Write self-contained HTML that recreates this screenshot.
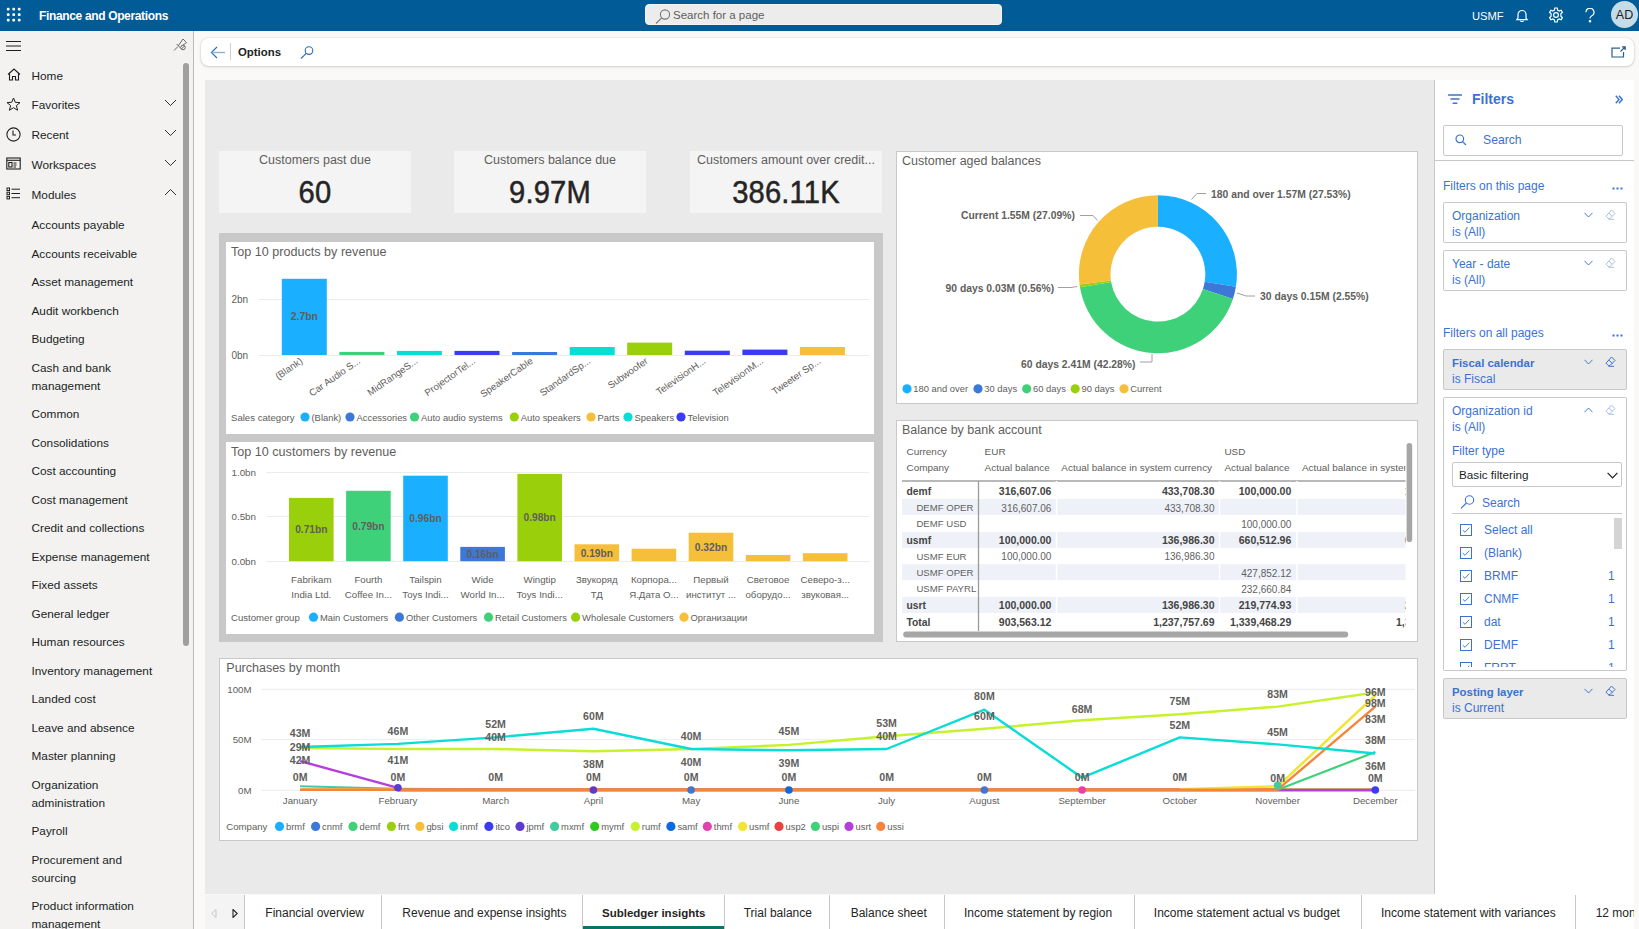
<!DOCTYPE html>
<html><head><meta charset="utf-8">
<style>
*{margin:0;padding:0;box-sizing:border-box}
html,body{width:1639px;height:929px;overflow:hidden;font-family:"Liberation Sans",sans-serif;background:#faf9f8;position:relative}
.a{position:absolute}
#hdr{left:0;top:0;width:1639px;height:31px;background:#005b96}
#nav{left:0;top:31px;width:194px;height:898px;background:#f3f2f1;border-right:1px solid #bdbbb9}
#nav .it{position:absolute;left:31.5px;font-size:11.8px;color:#201f1e;line-height:18px;white-space:nowrap}
#optbar{left:201px;top:38px;width:1433px;height:28px;background:#fff;border-radius:8px;box-shadow:0 0 2px rgba(0,0,0,.14),0 1px 3px rgba(0,0,0,.14)}
#canvas{left:205px;top:80px;width:1230px;height:814px;background:#eaeaea;border-right:1px solid #c8c8c8}
#fpanel{left:1435px;top:80px;width:199px;height:849px;background:#fff}
#tabs{left:205px;top:895px;width:1429px;height:34px;background:#fff;overflow:hidden}
.tab{top:10.5px;font-size:12px;line-height:15px;color:#252423;white-space:nowrap}
.tab.b{font-weight:bold;font-size:11.5px}
.fl{font-size:12px;line-height:15px;color:#3b72d2;white-space:nowrap}
.dots{font-size:12px;line-height:15px;color:#3b72d2;letter-spacing:-1px;font-weight:bold}
.fc{width:184px;border:1px solid #c8c8c8;border-radius:2px;background:#fff}
.fc.g{background:#eaeaea}
.fc .n{position:absolute;left:8px;top:4.5px;font-size:12px;line-height:16px;color:#3b72d2;white-space:nowrap}
.fc .n.b{font-weight:bold;font-size:11.4px}
.fc .v{position:absolute;left:8px;top:20.5px;font-size:12px;line-height:16px;color:#3b72d2;white-space:nowrap}
.cl{font-size:12px;line-height:15px;color:#3b72d2;white-space:nowrap}
.kpi{top:151px;width:192px;height:62px;background:#f4f4f4;text-align:center;color:#252423}
.kpi .t{position:absolute;left:0;right:0;top:2px;font-size:12.5px;line-height:15px;color:#605e5c;white-space:nowrap}
.kpi .v{position:absolute;left:0;right:0;top:25px;font-size:31px;line-height:34px;letter-spacing:.2px;transform:scaleX(.94);-webkit-text-stroke:.5px #252423;color:#252423}
.card{background:#fff;border:1px solid #c8c8c8}
</style></head><body>
<div id="canvas" class="a"></div>
<!-- HEADER -->
<div id="hdr" class="a">
 <svg class="a" style="left:5.5px;top:6.5px" width="16" height="16" viewBox="0 0 16 16" fill="#fff"><rect x="0.8" y="0.8" width="2.8" height="2.8" rx="1"/><rect x="6.3" y="0.8" width="2.8" height="2.8" rx="1"/><rect x="11.8" y="0.8" width="2.8" height="2.8" rx="1"/><rect x="0.8" y="6.3" width="2.8" height="2.8" rx="1"/><rect x="6.3" y="6.3" width="2.8" height="2.8" rx="1"/><rect x="11.8" y="6.3" width="2.8" height="2.8" rx="1"/><rect x="0.8" y="11.8" width="2.8" height="2.8" rx="1"/><rect x="6.3" y="11.8" width="2.8" height="2.8" rx="1"/><rect x="11.8" y="11.8" width="2.8" height="2.8" rx="1"/></svg>
 <div class="a" style="left:39px;top:8.7px;font-size:12px;letter-spacing:-.35px;font-weight:bold;color:#fff;white-space:nowrap;line-height:15px">Finance and Operations</div>
 <div class="a" style="left:645px;top:4px;width:357px;height:21px;background:#ececec;border:1px solid #f6f4f2;border-radius:4px"></div>
 <svg class="a" style="left:655px;top:9px" width="16" height="15" viewBox="0 0 16 15" fill="none" stroke="#7a7775" stroke-width="1.1"><circle cx="10" cy="5.5" r="4.6"/><path d="M6.7 8.8 L1 14.5"/></svg>
 <div class="a" style="left:673px;top:8px;font-size:11.5px;color:#605e5c;white-space:nowrap;line-height:14px">Search for a page</div>
 <div class="a" style="left:1472px;top:9px;font-size:11.2px;color:#fff;white-space:nowrap;line-height:14px">USMF</div>
 <svg class="a" style="left:1515px;top:9px" width="14" height="13" viewBox="0 0 14 13" fill="none" stroke="#fff" stroke-width="1.2"><path d="M3 9 V5.5 A4 4 0 0 1 11 5.5 V9 L12.2 10.6 H1.8 Z"/><path d="M5.5 11.6 A1.6 1.6 0 0 0 8.5 11.6"/></svg>
 <svg class="a" style="left:1548px;top:7px" width="16" height="16" viewBox="0 0 16 16" fill="none" stroke="#fff" stroke-width="1.2"><circle cx="8" cy="8" r="2.4"/><path d="M6.8 1 H9.2 L9.6 3 L11.3 4 L13.2 3.2 L14.4 5.3 L12.9 6.7 V9.3 L14.4 10.7 L13.2 12.8 L11.3 12 L9.6 13 L9.2 15 H6.8 L6.4 13 L4.7 12 L2.8 12.8 L1.6 10.7 L3.1 9.3 V6.7 L1.6 5.3 L2.8 3.2 L4.7 4 L6.4 3 Z"/></svg>
 <svg class="a" style="left:1584px;top:8px" width="12" height="15" viewBox="0 0 12 15" fill="none" stroke="#fff" stroke-width="1.2"><path d="M2 4.3 A4 4 0 1 1 7.5 8 C6.4 8.6 6 9.3 6 10.6"/><circle cx="6" cy="13.3" r=".7" fill="#fff"/></svg>
 <div class="a" style="left:1611px;top:1px;width:27px;height:27px;border-radius:50%;background:#c5dbe8;color:#201f1e;font-size:12.5px;line-height:29px;text-align:center">AD</div>
</div>

<!-- NAV -->
<div id="nav" class="a">
 <svg class="a" style="left:6px;top:10px" width="16" height="11" viewBox="0 0 16 11" stroke="#201f1e" stroke-width="1"><path d="M0 .5H15M0 5H15M0 9.5H15"/></svg>
 <svg class="a" style="left:173px;top:6px" width="15" height="15" viewBox="0 0 15 15" fill="none" stroke="#6b6967" stroke-width="1"><path d="M1 13.5 L5 9.5 M3.5 7 L8 11.5 M5.2 8.8 L10 2 L13.5 5.5 L8.2 9.5"/><circle cx="10" cy="10.5" r="2.3" fill="#f3f2f1"/><path d="M8.6 11.9 L11.4 9.1"/></svg>
 <div class="a" style="left:183px;top:32px;width:6px;height:583px;background:#a19f9d;border-radius:3px"></div>
 <!-- icons -->
 <svg class="a" style="left:7px;top:37px" width="14" height="13" viewBox="0 0 14 13" fill="none" stroke="#201f1e" stroke-width="1.1"><path d="M1 6.5 L7 1 L13 6.5 M2.5 5.5 V12 H5.5 V8.5 H8.5 V12 H11.5 V5.5"/></svg>
 <svg class="a" style="left:6px;top:66px" width="15" height="15" viewBox="0 0 15 15" fill="none" stroke="#201f1e" stroke-width="1"><path d="M7.5 1 L9.3 5.3 L14 5.6 L10.4 8.6 L11.6 13.3 L7.5 10.7 L3.4 13.3 L4.6 8.6 L1 5.6 L5.7 5.3 Z"/></svg>
 <svg class="a" style="left:6px;top:96px" width="15" height="15" viewBox="0 0 15 15" fill="none" stroke="#201f1e" stroke-width="1.1"><circle cx="7.5" cy="7.5" r="6.6"/><path d="M7 3.5 V8 H10"/></svg>
 <svg class="a" style="left:6px;top:126px" width="15" height="14" viewBox="0 0 15 14" fill="none" stroke="#201f1e" stroke-width="1.1"><rect x=".8" y="1" width="13.4" height="11"/><path d="M.8 3.3 H14.2"/><rect x="2.8" y="5.5" width="3.2" height="4.5"/><path d="M7.5 6 H10.5 M7.5 8 H10.5 M7.5 10 H10"/></svg>
 <svg class="a" style="left:6px;top:156px" width="15" height="13" viewBox="0 0 15 13" fill="none" stroke="#201f1e" stroke-width="1"><rect x="1" y="1" width="2.5" height="2.5"/><rect x="1" y="5.2" width="2.5" height="2.5"/><rect x="1" y="9.4" width="2.5" height="2.5"/><path d="M5.5 2.2 H14 M5.5 6.5 H14 M5.5 10.7 H14"/></svg>
 <svg class="a" style="left:164px;top:68px" width="13" height="70" viewBox="0 0 13 70" fill="none" stroke="#323130" stroke-width="1"><path d="M1 1 L6.5 6.5 L12 1 M1 31 L6.5 36.5 L12 31 M1 61 L6.5 66.5 L12 61"/></svg>
 <svg class="a" style="left:164px;top:157px" width="13" height="8" viewBox="0 0 13 8" fill="none" stroke="#323130" stroke-width="1"><path d="M1 7 L6.5 1.5 L12 7"/></svg>
 <div class="it" style="top:35.5px">Home</div>
 <div class="it" style="top:64.5px">Favorites</div>
 <div class="it" style="top:95px">Recent</div>
 <div class="it" style="top:124.5px">Workspaces</div>
 <div class="it" style="top:155px">Modules</div>
  <div class="it" style="top:184.9px">Accounts payable</div>
 <div class="it" style="top:213.9px">Accounts receivable</div>
 <div class="it" style="top:242.4px">Asset management</div>
 <div class="it" style="top:270.9px">Audit workbench</div>
 <div class="it" style="top:299.4px">Budgeting</div>
 <div class="it" style="top:328.4px">Cash and bank<br>management</div>
 <div class="it" style="top:373.9px">Common</div>
 <div class="it" style="top:402.9px">Consolidations</div>
 <div class="it" style="top:431.4px">Cost accounting</div>
 <div class="it" style="top:459.9px">Cost management</div>
 <div class="it" style="top:488.4px">Credit and collections</div>
 <div class="it" style="top:516.9px">Expense management</div>
 <div class="it" style="top:545.4px">Fixed assets</div>
 <div class="it" style="top:573.9px">General ledger</div>
 <div class="it" style="top:602.4px">Human resources</div>
 <div class="it" style="top:630.9px">Inventory management</div>
 <div class="it" style="top:659.4px">Landed cost</div>
 <div class="it" style="top:687.9px">Leave and absence</div>
 <div class="it" style="top:716.4px">Master planning</div>
 <div class="it" style="top:744.9px">Organization<br>administration</div>
 <div class="it" style="top:790.9px">Payroll</div>
 <div class="it" style="top:819.9px">Procurement and<br>sourcing</div>
 <div class="it" style="top:866.4px">Product information<br>management</div>
</div>

<!-- OPTIONS BAR -->
<div id="optbar" class="a">
 <svg class="a" style="left:9px;top:8px" width="16" height="13" viewBox="0 0 16 13" fill="none" stroke="#2b6cb0" stroke-width="1.1"><path d="M7 1 L1.3 6.5 L7 12"/><path d="M1.5 6.5 H15" stroke="#8fb0cc" stroke-width="1.4"/></svg>
 <div class="a" style="left:29px;top:5px;width:1px;height:17px;background:#d2d0ce"></div>
 <div class="a" style="left:37px;top:7px;font-size:11.4px;font-weight:bold;color:#201f1e;line-height:14px">Options</div>
 <svg class="a" style="left:99px;top:8px" width="14" height="13" viewBox="0 0 14 13" fill="none" stroke="#2b6cb0" stroke-width="1.1"><circle cx="9" cy="4.6" r="3.8"/><path d="M6.3 7.4 L1 12.5"/></svg>
 <svg class="a" style="left:1410px;top:8px" width="15" height="12" viewBox="0 0 15 12" fill="none" stroke="#2b5d8a" stroke-width="1.2"><path d="M9 2.2 H1 V11 H12.5 V6"/><path d="M9.5 5.5 L14 1 M11 .8 H14.2 V4"/></svg>
</div>

<!-- FILTER PANEL -->
<div id="fpanel" class="a"> <svg class="a" style="left:13px;top:13.5px" width="14" height="11" viewBox="0 0 14 11" fill="none" stroke="#3b72d2" stroke-width="1.4" stroke-linecap="round"><path d="M.5 1 H13.5 M3 5 H11 M5.2 9.2 H8.8"/></svg>
 <div class="a" style="left:37px;top:11px;font-size:14px;font-weight:bold;color:#3b72d2;line-height:17px">Filters</div>
 <svg class="a" style="left:180px;top:15px" width="8" height="9" viewBox="0 0 8 9" fill="none" stroke="#3b72d2" stroke-width="1.4"><path d="M.8 .8 L4 4.5 L.8 8.2 M4 .8 L7.2 4.5 L4 8.2"/></svg>
 <div class="a" style="left:8px;top:45px;width:180px;height:31px;border:1px solid #c8c8c8;border-radius:2px"></div>
 <svg class="a" style="left:20px;top:54px" width="12" height="12" viewBox="0 0 12 12" fill="none" stroke="#3b72d2" stroke-width="1.2"><circle cx="4.8" cy="4.8" r="3.8"/><path d="M7.6 7.6 L11 11"/></svg>
 <div class="a" style="left:48px;top:53px;font-size:12.2px;color:#3b72d2;line-height:15px">Search</div>
 <div class="a" style="left:0;top:80px;width:199px;height:1px;background:#c8c8c8"></div>
 <div class="a fl" style="left:8px;top:99px">Filters on this page</div>
 <svg class="a" style="left:177px;top:107px" width="11" height="3" viewBox="0 0 11 3" fill="#3b72d2"><rect x="0.5" y="0.5" width="2" height="2"/><rect x="4.5" y="0.5" width="2" height="2"/><rect x="8.5" y="0.5" width="2" height="2"/></svg>
 <div class="a fc" style="left:8px;top:122px;height:41px"><div class="n">Organization</div><div class="v">is (All)</div><svg class="a" style="left:140px;top:9px" width="9" height="6" viewBox="0 0 9 6" fill="none" stroke="#3b72d2" stroke-width="0.95"><path d="M.5 .8 L4.5 5 L8.5 .8"/></svg> <svg class="a" style="left:161px;top:6px" width="11" height="11" viewBox="0 0 11 11" fill="none" stroke="#a9c0ea" stroke-width="1"><path d="M6.5 1 L10 4.5 L5 9.5 H3.3 L1 7.2 Z M3.8 4 L7.3 7.5 M3.5 10.3 H9"/></svg></div>
 <div class="a fc" style="left:8px;top:170px;height:41px"><div class="n">Year - date</div><div class="v">is (All)</div><svg class="a" style="left:140px;top:9px" width="9" height="6" viewBox="0 0 9 6" fill="none" stroke="#3b72d2" stroke-width="0.95"><path d="M.5 .8 L4.5 5 L8.5 .8"/></svg> <svg class="a" style="left:161px;top:6px" width="11" height="11" viewBox="0 0 11 11" fill="none" stroke="#a9c0ea" stroke-width="1"><path d="M6.5 1 L10 4.5 L5 9.5 H3.3 L1 7.2 Z M3.8 4 L7.3 7.5 M3.5 10.3 H9"/></svg></div>
 <div class="a fl" style="left:8px;top:246px">Filters on all pages</div>
 <svg class="a" style="left:177px;top:254px" width="11" height="3" viewBox="0 0 11 3" fill="#3b72d2"><rect x="0.5" y="0.5" width="2" height="2"/><rect x="4.5" y="0.5" width="2" height="2"/><rect x="8.5" y="0.5" width="2" height="2"/></svg>
 <div class="a fc g" style="left:8px;top:269px;height:41px"><div class="n b">Fiscal calendar</div><div class="v">is Fiscal</div><svg class="a" style="left:140px;top:9px" width="9" height="6" viewBox="0 0 9 6" fill="none" stroke="#3b72d2" stroke-width="0.95"><path d="M.5 .8 L4.5 5 L8.5 .8"/></svg> <svg class="a" style="left:161px;top:6px" width="11" height="11" viewBox="0 0 11 11" fill="none" stroke="#3b72d2" stroke-width="1"><path d="M6.5 1 L10 4.5 L5 9.5 H3.3 L1 7.2 Z M3.8 4 L7.3 7.5 M3.5 10.3 H9"/></svg></div>
 <div class="a fc" style="left:8px;top:317px;height:274px"><div class="n">Organization id</div><div class="v">is (All)</div><svg class="a" style="left:140px;top:9px" width="9" height="6" viewBox="0 0 9 6" fill="none" stroke="#3b72d2" stroke-width="0.95"><path d="M.5 5.2 L4.5 1 L8.5 5.2"/></svg> <svg class="a" style="left:161px;top:6px" width="11" height="11" viewBox="0 0 11 11" fill="none" stroke="#a9c0ea" stroke-width="1"><path d="M6.5 1 L10 4.5 L5 9.5 H3.3 L1 7.2 Z M3.8 4 L7.3 7.5 M3.5 10.3 H9"/></svg>
  <div class="a fl" style="left:8px;top:46px">Filter type</div>
  <div class="a" style="left:8px;top:64px;width:170px;height:25px;border:1px solid #c8c8c8;border-radius:2px;background:#fff"></div>
  <div class="a" style="left:15px;top:70px;font-size:11.7px;color:#201f1e;line-height:14px">Basic filtering</div>
  <svg class="a" style="left:163px;top:74px" width="11" height="7" viewBox="0 0 11 7" fill="none" stroke="#201f1e" stroke-width="1.2"><path d="M.6 .8 L5.5 5.8 L10.4 .8"/></svg>
  <svg class="a" style="left:16px;top:97px" width="15" height="14" viewBox="0 0 15 14" fill="none" stroke="#3b72d2" stroke-width="1.1"><circle cx="9.5" cy="5" r="4.2"/><path d="M6.4 8 L1 13.3"/></svg>
  <div class="a" style="left:38px;top:98px;font-size:12px;color:#3b72d2;line-height:15px">Search</div>
  <div class="a" style="left:8px;top:115px;width:170px;height:1px;background:#c8c8c8"></div>
  <div class="a" style="left:170px;top:120px;width:8px;height:31px;background:#d4d4d4"></div>
  <div class="a" style="left:0;top:118px;width:182px;height:151px;overflow:hidden">
   <svg class="a" style="left:16px;top:8px" width="12" height="12" viewBox="0 0 12 12" fill="none" stroke="#3b72d2"><rect x=".5" y=".5" width="11" height="11"/><path d="M2.8 6.2 L5 8.3 L9.3 3.6" stroke-width=".9"/></svg><div class="a cl" style="left:40px;top:7px">Select all</div><div class="a cl" style="left:164px;top:7px"></div>
   <svg class="a" style="left:16px;top:31px" width="12" height="12" viewBox="0 0 12 12" fill="none" stroke="#3b72d2"><rect x=".5" y=".5" width="11" height="11"/><path d="M2.8 6.2 L5 8.3 L9.3 3.6" stroke-width=".9"/></svg><div class="a cl" style="left:40px;top:30px">(Blank)</div><div class="a cl" style="left:164px;top:30px"></div>
   <svg class="a" style="left:16px;top:54px" width="12" height="12" viewBox="0 0 12 12" fill="none" stroke="#3b72d2"><rect x=".5" y=".5" width="11" height="11"/><path d="M2.8 6.2 L5 8.3 L9.3 3.6" stroke-width=".9"/></svg><div class="a cl" style="left:40px;top:53px">BRMF</div><div class="a cl" style="left:164px;top:53px">1</div>
   <svg class="a" style="left:16px;top:77px" width="12" height="12" viewBox="0 0 12 12" fill="none" stroke="#3b72d2"><rect x=".5" y=".5" width="11" height="11"/><path d="M2.8 6.2 L5 8.3 L9.3 3.6" stroke-width=".9"/></svg><div class="a cl" style="left:40px;top:76px">CNMF</div><div class="a cl" style="left:164px;top:76px">1</div>
   <svg class="a" style="left:16px;top:100px" width="12" height="12" viewBox="0 0 12 12" fill="none" stroke="#3b72d2"><rect x=".5" y=".5" width="11" height="11"/><path d="M2.8 6.2 L5 8.3 L9.3 3.6" stroke-width=".9"/></svg><div class="a cl" style="left:40px;top:99px">dat</div><div class="a cl" style="left:164px;top:99px">1</div>
   <svg class="a" style="left:16px;top:123px" width="12" height="12" viewBox="0 0 12 12" fill="none" stroke="#3b72d2"><rect x=".5" y=".5" width="11" height="11"/><path d="M2.8 6.2 L5 8.3 L9.3 3.6" stroke-width=".9"/></svg><div class="a cl" style="left:40px;top:122px">DEMF</div><div class="a cl" style="left:164px;top:122px">1</div>
   <svg class="a" style="left:16px;top:146px" width="12" height="12" viewBox="0 0 12 12" fill="none" stroke="#3b72d2"><rect x=".5" y=".5" width="11" height="11"/><path d="M2.8 6.2 L5 8.3 L9.3 3.6" stroke-width=".9"/></svg><div class="a cl" style="left:40px;top:145px">FRRT</div><div class="a cl" style="left:164px;top:145px">1</div>
  </div>
 </div>
 <div class="a fc g" style="left:8px;top:598px;height:41px"><div class="n b">Posting layer</div><div class="v">is Current</div><svg class="a" style="left:140px;top:9px" width="9" height="6" viewBox="0 0 9 6" fill="none" stroke="#3b72d2" stroke-width="0.95"><path d="M.5 .8 L4.5 5 L8.5 .8"/></svg> <svg class="a" style="left:161px;top:6px" width="11" height="11" viewBox="0 0 11 11" fill="none" stroke="#3b72d2" stroke-width="1"><path d="M6.5 1 L10 4.5 L5 9.5 H3.3 L1 7.2 Z M3.8 4 L7.3 7.5 M3.5 10.3 H9"/></svg></div>
</div>

<!-- <div class="a" style="left:0;top:0;width:39px;height:34px;background:#f4f4f4"></div>
<svg class="a" style="left:6px;top:14px" width="6" height="9" viewBox="0 0 6 9" fill="none" stroke="#c8c8c8" stroke-width="1"><path d="M5 .5 L.8 4.5 L5 8.5 Z"/></svg>
<svg class="a" style="left:27px;top:14px" width="6" height="9" viewBox="0 0 6 9" fill="none" stroke="#252423" stroke-width="1.1"><path d="M1 .5 L5.2 4.5 L1 8.5 Z"/></svg>
<div class="a" style="left:39.0px;top:0;width:1px;height:34px;background:#c8c8c8"></div>
<div class="a tab" style="left:60.3px">Financial overview</div>
<div class="a" style="left:176.0px;top:0;width:1px;height:34px;background:#c8c8c8"></div>
<div class="a tab" style="left:197.3px">Revenue and expense insights</div>
<div class="a" style="left:377.0px;top:0;width:1px;height:34px;background:#c8c8c8"></div>
<div class="a tab b" style="left:397.0px">Subledger insights</div>
<div class="a" style="left:378.0px;top:31px;width:140.5px;height:3px;background:#077568"></div>
<div class="a" style="left:518.5px;top:0;width:1px;height:34px;background:#c8c8c8"></div>
<div class="a tab" style="left:538.7px">Trial balance</div>
<div class="a" style="left:624.0px;top:0;width:1px;height:34px;background:#c8c8c8"></div>
<div class="a tab" style="left:645.7px">Balance sheet</div>
<div class="a" style="left:739.0px;top:0;width:1px;height:34px;background:#c8c8c8"></div>
<div class="a tab" style="left:759.0px">Income statement by region</div>
<div class="a" style="left:928.5px;top:0;width:1px;height:34px;background:#c8c8c8"></div>
<div class="a tab" style="left:948.8px">Income statement actual vs budget</div>
<div class="a" style="left:1156.0px;top:0;width:1px;height:34px;background:#c8c8c8"></div>
<div class="a tab" style="left:1176.0px">Income statement with variances</div>
<div class="a" style="left:1370.0px;top:0;width:1px;height:34px;background:#c8c8c8"></div>
<div class="a tab" style="left:1390.7px">12 months</div> -->
<div id="tabs" class="a"><div class="a" style="left:0;top:0;width:39px;height:34px;background:#f4f4f4"></div>
<svg class="a" style="left:6px;top:14px" width="6" height="9" viewBox="0 0 6 9" fill="none" stroke="#c8c8c8" stroke-width="1"><path d="M5 .5 L.8 4.5 L5 8.5 Z"/></svg>
<svg class="a" style="left:27px;top:14px" width="6" height="9" viewBox="0 0 6 9" fill="none" stroke="#252423" stroke-width="1.1"><path d="M1 .5 L5.2 4.5 L1 8.5 Z"/></svg>
<div class="a" style="left:39.0px;top:0;width:1px;height:34px;background:#c8c8c8"></div>
<div class="a tab" style="left:60.3px">Financial overview</div>
<div class="a" style="left:176.0px;top:0;width:1px;height:34px;background:#c8c8c8"></div>
<div class="a tab" style="left:197.3px">Revenue and expense insights</div>
<div class="a" style="left:377.0px;top:0;width:1px;height:34px;background:#c8c8c8"></div>
<div class="a tab b" style="left:397.0px">Subledger insights</div>
<div class="a" style="left:378.0px;top:31px;width:140.5px;height:3px;background:#077568"></div>
<div class="a" style="left:518.5px;top:0;width:1px;height:34px;background:#c8c8c8"></div>
<div class="a tab" style="left:538.7px">Trial balance</div>
<div class="a" style="left:624.0px;top:0;width:1px;height:34px;background:#c8c8c8"></div>
<div class="a tab" style="left:645.7px">Balance sheet</div>
<div class="a" style="left:739.0px;top:0;width:1px;height:34px;background:#c8c8c8"></div>
<div class="a tab" style="left:759.0px">Income statement by region</div>
<div class="a" style="left:928.5px;top:0;width:1px;height:34px;background:#c8c8c8"></div>
<div class="a tab" style="left:948.8px">Income statement actual vs budget</div>
<div class="a" style="left:1156.0px;top:0;width:1px;height:34px;background:#c8c8c8"></div>
<div class="a tab" style="left:1176.0px">Income statement with variances</div>
<div class="a" style="left:1370.0px;top:0;width:1px;height:34px;background:#c8c8c8"></div>
<div class="a tab" style="left:1390.7px">12 months</div></div>

<div class="a kpi" style="left:219px"><div class="t">Customers past due</div><div class="v">60</div></div>
<div class="a kpi" style="left:454px"><div class="t">Customers balance due</div><div class="v">9.97M</div></div>
<div class="a kpi" style="left:690px"><div class="t">Customers amount over credit...</div><div class="v">386.11K</div></div>
<div class="a" style="left:219px;top:233px;width:664px;height:409px;background:#c8c8c8"></div>
<div class="a" style="left:226px;top:242px;width:648px;height:192px;background:#fff"></div>
<div class="a" style="left:226px;top:442px;width:648px;height:192px;background:#fff"></div>
<div class="a card" style="left:896px;top:151px;width:522px;height:253px"></div>
<div class="a card" style="left:896px;top:420px;width:522px;height:222px"></div>
<div class="a card" style="left:219px;top:658px;width:1199px;height:183px"></div>
<svg class="a" style="left:226px;top:242px" width="648" height="192" viewBox="226 242 648 192">
<text x="231" y="255.5" font-size="12.6" fill="#605e5c" font-family="Liberation Sans">Top 10 products by revenue</text>
<path d="M258 299.5 H869 M258 355.5 H869" stroke="#ececec" stroke-width="1"/>
<text x="231.5" y="303" font-size="10" fill="#605e5c" font-family="Liberation Sans">2bn</text>
<text x="231.5" y="358.5" font-size="10" fill="#605e5c" font-family="Liberation Sans">0bn</text>
<rect x="281.8" y="278.8" width="45" height="76.2" fill="#1aafff"/>
<text transform="translate(303.3 362.5) rotate(-35)" text-anchor="end" font-size="9.7" fill="#605e5c" font-family="Liberation Sans">(Blank)</text>
<rect x="339.4" y="351.9" width="45" height="3.1" fill="#3fd17a"/>
<text transform="translate(360.9 362.5) rotate(-35)" text-anchor="end" font-size="9.7" fill="#605e5c" font-family="Liberation Sans">Car Audio S...</text>
<rect x="396.9" y="350.9" width="45" height="4.1" fill="#0adcd6"/>
<text transform="translate(418.4 362.5) rotate(-35)" text-anchor="end" font-size="9.7" fill="#605e5c" font-family="Liberation Sans">MidRangeS...</text>
<rect x="454.5" y="350.9" width="45" height="4.1" fill="#3b3bf2"/>
<text transform="translate(476.0 362.5) rotate(-35)" text-anchor="end" font-size="9.7" fill="#605e5c" font-family="Liberation Sans">ProjectorTel...</text>
<rect x="512.1" y="352" width="45" height="3.0" fill="#3c78d8"/>
<text transform="translate(533.6 362.5) rotate(-35)" text-anchor="end" font-size="9.7" fill="#605e5c" font-family="Liberation Sans">SpeakerCable</text>
<rect x="569.7" y="347" width="45" height="8.0" fill="#0adcd6"/>
<text transform="translate(591.2 362.5) rotate(-35)" text-anchor="end" font-size="9.7" fill="#605e5c" font-family="Liberation Sans">StandardSp...</text>
<rect x="627.2" y="342.6" width="45" height="12.4" fill="#9acf0b"/>
<text transform="translate(648.7 362.5) rotate(-35)" text-anchor="end" font-size="9.7" fill="#605e5c" font-family="Liberation Sans">Subwoofer</text>
<rect x="684.8" y="350.7" width="45" height="4.3" fill="#3b3bf2"/>
<text transform="translate(706.3 362.5) rotate(-35)" text-anchor="end" font-size="9.7" fill="#605e5c" font-family="Liberation Sans">TelevisionH...</text>
<rect x="742.4" y="349.6" width="45" height="5.4" fill="#3b3bf2"/>
<text transform="translate(763.9 362.5) rotate(-35)" text-anchor="end" font-size="9.7" fill="#605e5c" font-family="Liberation Sans">TelevisionM...</text>
<rect x="799.9" y="347" width="45" height="8.0" fill="#f5bf3a"/>
<text transform="translate(821.4 362.5) rotate(-35)" text-anchor="end" font-size="9.7" fill="#605e5c" font-family="Liberation Sans">Tweeter Sp...</text>
<text x="304.3" y="320" text-anchor="middle" font-size="10.4" font-weight="bold" fill="#605e5c" font-family="Liberation Sans">2.7bn</text>
<text x="231" y="420.5" font-size="9.6" fill="#605e5c" font-family="Liberation Sans">Sales category</text>
<circle cx="305" cy="417" r="4.6" fill="#1aafff"/>
<text x="311.5" y="420.5" font-size="9.4" fill="#605e5c" font-family="Liberation Sans">(Blank)</text>
<circle cx="350" cy="417" r="4.6" fill="#3c78d8"/>
<text x="356.5" y="420.5" font-size="9.4" fill="#605e5c" font-family="Liberation Sans">Accessories</text>
<circle cx="414.5" cy="417" r="4.6" fill="#3fd17a"/>
<text x="421.0" y="420.5" font-size="9.4" fill="#605e5c" font-family="Liberation Sans">Auto audio systems</text>
<circle cx="514.3" cy="417" r="4.6" fill="#9acf0b"/>
<text x="520.8" y="420.5" font-size="9.4" fill="#605e5c" font-family="Liberation Sans">Auto speakers</text>
<circle cx="591" cy="417" r="4.6" fill="#f5bf3a"/>
<text x="597.5" y="420.5" font-size="9.4" fill="#605e5c" font-family="Liberation Sans">Parts</text>
<circle cx="628" cy="417" r="4.6" fill="#0adcd6"/>
<text x="634.5" y="420.5" font-size="9.4" fill="#605e5c" font-family="Liberation Sans">Speakers</text>
<circle cx="681" cy="417" r="4.6" fill="#3b3bf2"/>
<text x="687.5" y="420.5" font-size="9.4" fill="#605e5c" font-family="Liberation Sans">Television</text>
</svg>
<svg class="a" style="left:226px;top:442px" width="648" height="192" viewBox="226 442 648 192">
<text x="231" y="455.5" font-size="12.6" fill="#605e5c" font-family="Liberation Sans">Top 10 customers by revenue</text>
<path d="M266 472.5 H869 M266 516.5 H869 M266 561.5 H869" stroke="#ececec" stroke-width="1"/>
<text x="231.5" y="475.8" font-size="9.8" fill="#605e5c" font-family="Liberation Sans">1.0bn</text>
<text x="231.5" y="520.3" font-size="9.8" fill="#605e5c" font-family="Liberation Sans">0.5bn</text>
<text x="231.5" y="564.8" font-size="9.8" fill="#605e5c" font-family="Liberation Sans">0.0bn</text>
<rect x="289.0" y="497.9" width="44.6" height="63.3" fill="#9acf0b"/>
<text x="311.3" y="533.4" text-anchor="middle" font-size="10.2" font-weight="bold" fill="#605e5c" font-family="Liberation Sans">0.71bn</text>
<text x="311.3" y="582.5" text-anchor="middle" font-size="9.7" fill="#605e5c" font-family="Liberation Sans">Fabrikam</text>
<text x="311.3" y="597.6" text-anchor="middle" font-size="9.7" fill="#605e5c" font-family="Liberation Sans">India Ltd.</text>
<rect x="346.1" y="490.8" width="44.6" height="70.4" fill="#3fd17a"/>
<text x="368.4" y="529.8" text-anchor="middle" font-size="10.2" font-weight="bold" fill="#605e5c" font-family="Liberation Sans">0.79bn</text>
<text x="368.4" y="582.5" text-anchor="middle" font-size="9.7" fill="#605e5c" font-family="Liberation Sans">Fourth</text>
<text x="368.4" y="597.6" text-anchor="middle" font-size="9.7" fill="#605e5c" font-family="Liberation Sans">Coffee In...</text>
<rect x="403.2" y="475.7" width="44.6" height="85.5" fill="#1aafff"/>
<text x="425.5" y="522.2" text-anchor="middle" font-size="10.2" font-weight="bold" fill="#605e5c" font-family="Liberation Sans">0.96bn</text>
<text x="425.5" y="582.5" text-anchor="middle" font-size="9.7" fill="#605e5c" font-family="Liberation Sans">Tailspin</text>
<text x="425.5" y="597.6" text-anchor="middle" font-size="9.7" fill="#605e5c" font-family="Liberation Sans">Toys Indi...</text>
<rect x="460.3" y="546.9" width="44.6" height="14.3" fill="#3c78d8"/>
<text x="482.6" y="557.9" text-anchor="middle" font-size="10.2" font-weight="bold" fill="#605e5c" font-family="Liberation Sans">0.16bn</text>
<text x="482.6" y="582.5" text-anchor="middle" font-size="9.7" fill="#605e5c" font-family="Liberation Sans">Wide</text>
<text x="482.6" y="597.6" text-anchor="middle" font-size="9.7" fill="#605e5c" font-family="Liberation Sans">World In...</text>
<rect x="517.4" y="473.9" width="44.6" height="87.3" fill="#9acf0b"/>
<text x="539.7" y="521.3" text-anchor="middle" font-size="10.2" font-weight="bold" fill="#605e5c" font-family="Liberation Sans">0.98bn</text>
<text x="539.7" y="582.5" text-anchor="middle" font-size="9.7" fill="#605e5c" font-family="Liberation Sans">Wingtip</text>
<text x="539.7" y="597.6" text-anchor="middle" font-size="9.7" fill="#605e5c" font-family="Liberation Sans">Toys Indi...</text>
<rect x="574.5" y="544.3" width="44.6" height="16.9" fill="#f5bf3a"/>
<text x="596.8" y="556.5" text-anchor="middle" font-size="10.2" font-weight="bold" fill="#605e5c" font-family="Liberation Sans">0.19bn</text>
<text x="596.8" y="582.5" text-anchor="middle" font-size="9.7" fill="#605e5c" font-family="Liberation Sans">Звукоряд</text>
<text x="596.8" y="597.6" text-anchor="middle" font-size="9.7" fill="#605e5c" font-family="Liberation Sans">ТД</text>
<rect x="631.6" y="548.7" width="44.6" height="12.5" fill="#f5bf3a"/>
<text x="653.9" y="582.5" text-anchor="middle" font-size="9.7" fill="#605e5c" font-family="Liberation Sans">Корпора...</text>
<text x="653.9" y="597.6" text-anchor="middle" font-size="9.7" fill="#605e5c" font-family="Liberation Sans">Я.Дата О...</text>
<rect x="688.7" y="532.7" width="44.6" height="28.5" fill="#f5bf3a"/>
<text x="711.0" y="550.7" text-anchor="middle" font-size="10.2" font-weight="bold" fill="#605e5c" font-family="Liberation Sans">0.32bn</text>
<text x="711.0" y="582.5" text-anchor="middle" font-size="9.7" fill="#605e5c" font-family="Liberation Sans">Первый</text>
<text x="711.0" y="597.6" text-anchor="middle" font-size="9.7" fill="#605e5c" font-family="Liberation Sans">институт ...</text>
<rect x="745.8" y="555.0" width="44.6" height="6.2" fill="#f5bf3a"/>
<text x="768.1" y="582.5" text-anchor="middle" font-size="9.7" fill="#605e5c" font-family="Liberation Sans">Световое</text>
<text x="768.1" y="597.6" text-anchor="middle" font-size="9.7" fill="#605e5c" font-family="Liberation Sans">оборудо...</text>
<rect x="802.9" y="553.2" width="44.6" height="8.0" fill="#f5bf3a"/>
<text x="825.2" y="582.5" text-anchor="middle" font-size="9.7" fill="#605e5c" font-family="Liberation Sans">Северо-з...</text>
<text x="825.2" y="597.6" text-anchor="middle" font-size="9.7" fill="#605e5c" font-family="Liberation Sans">звуковая...</text>
<text x="231" y="620.7" font-size="9.6" fill="#605e5c" font-family="Liberation Sans">Customer group</text>
<circle cx="313.5" cy="617.2" r="4.6" fill="#1aafff"/>
<text x="320.0" y="620.7" font-size="9.4" fill="#605e5c" font-family="Liberation Sans">Main Customers</text>
<circle cx="399.4" cy="617.2" r="4.6" fill="#3c78d8"/>
<text x="405.9" y="620.7" font-size="9.4" fill="#605e5c" font-family="Liberation Sans">Other Customers</text>
<circle cx="488.5" cy="617.2" r="4.6" fill="#3fd17a"/>
<text x="495.0" y="620.7" font-size="9.4" fill="#605e5c" font-family="Liberation Sans">Retail Customers</text>
<circle cx="575.6" cy="617.2" r="4.6" fill="#9acf0b"/>
<text x="582.1" y="620.7" font-size="9.4" fill="#605e5c" font-family="Liberation Sans">Wholesale Customers</text>
<circle cx="684" cy="617.2" r="4.6" fill="#f5bf3a"/>
<text x="690.5" y="620.7" font-size="9.4" fill="#605e5c" font-family="Liberation Sans">Организации</text>
</svg>
<svg class="a" style="left:897px;top:152px" width="520" height="251" viewBox="897 152 520 251">
<text x="902" y="164.5" font-size="12.5" fill="#605e5c" font-family="Liberation Sans">Customer aged balances</text>
<path d="M1157.90 195.20 A79 79 0 0 1 1235.90 286.71 L1204.70 281.70 A47.4 47.4 0 0 0 1157.90 226.80 Z" fill="#1aafff"/>
<path d="M1235.90 286.71 A79 79 0 0 1 1232.91 298.99 L1202.91 289.07 A47.4 47.4 0 0 0 1204.70 281.70 Z" fill="#3c78d8"/>
<path d="M1232.91 298.99 A79 79 0 0 1 1079.98 287.24 L1111.15 282.03 A47.4 47.4 0 0 0 1202.91 289.07 Z" fill="#3fd17a"/>
<path d="M1079.98 287.24 A79 79 0 0 1 1079.57 284.50 L1110.90 280.38 A47.4 47.4 0 0 0 1111.15 282.03 Z" fill="#9acf0b"/>
<path d="M1079.57 284.50 A79 79 0 0 1 1157.95 195.20 L1157.93 226.80 A47.4 47.4 0 0 0 1110.90 280.38 Z" fill="#f5bf3a"/>
<path d="M1191.5 199.5 L1197 193.5 H1206 M1080 215.5 H1093 L1097.5 220.5 M1058 287.5 H1071 L1077 286.5 M1237 293 L1246 296 H1255 M1152 354 V362 H1140" fill="none" stroke="#a0a0a0" stroke-width="1"/>
<text x="1211" y="197.8" font-size="10.35" font-weight="bold" fill="#605e5c" font-family="Liberation Sans">180 and over 1.57M (27.53%)</text>
<text x="961" y="219.2" font-size="10.35" font-weight="bold" fill="#605e5c" font-family="Liberation Sans">Current 1.55M (27.09%)</text>
<text x="945.5" y="291.7" font-size="10.35" font-weight="bold" fill="#605e5c" font-family="Liberation Sans">90 days 0.03M (0.56%)</text>
<text x="1260" y="300" font-size="10.35" font-weight="bold" fill="#605e5c" font-family="Liberation Sans">30 days 0.15M (2.55%)</text>
<text x="1021" y="368.1" font-size="10.35" font-weight="bold" fill="#605e5c" font-family="Liberation Sans">60 days 2.41M (42.28%)</text>
<circle cx="907" cy="388.8" r="4.6" fill="#1aafff"/>
<text x="913.3" y="392.3" font-size="9.4" fill="#605e5c" font-family="Liberation Sans">180 and over</text>
<circle cx="978" cy="388.8" r="4.6" fill="#3c78d8"/>
<text x="984.3" y="392.3" font-size="9.4" fill="#605e5c" font-family="Liberation Sans">30 days</text>
<circle cx="1026.7" cy="388.8" r="4.6" fill="#3fd17a"/>
<text x="1033.0" y="392.3" font-size="9.4" fill="#605e5c" font-family="Liberation Sans">60 days</text>
<circle cx="1075.2" cy="388.8" r="4.6" fill="#9acf0b"/>
<text x="1081.5" y="392.3" font-size="9.4" fill="#605e5c" font-family="Liberation Sans">90 days</text>
<circle cx="1124" cy="388.8" r="4.6" fill="#f5bf3a"/>
<text x="1130.3" y="392.3" font-size="9.4" fill="#605e5c" font-family="Liberation Sans">Current</text>
</svg>
<svg class="a" style="left:897px;top:421px" width="520" height="220" viewBox="897 421 520 220">
<text x="902" y="433.8" font-size="12.5" fill="#605e5c" font-family="Liberation Sans">Balance by bank account</text>
<defs><clipPath id="tc"><rect x="902" y="440" width="503.5" height="195"/></clipPath></defs><g clip-path="url(#tc)">
<rect x="902" y="499.0" width="504" height="16" fill="#eef1f7"/>
<rect x="902" y="531.9" width="504" height="16" fill="#eef1f7"/>
<rect x="902" y="564.2" width="504" height="16" fill="#eef1f7"/>
<rect x="902" y="596.9" width="504" height="16" fill="#eef1f7"/>
<path d="M902 481 H1406" stroke="#a0a0a0" stroke-width="1.3"/>
<path d="M978.5 481 V631" stroke="#9a9a9a" stroke-width="1.3"/>
<path d="M1056.5 481 V631 M1219.5 481 V631 M1297 481 V631" stroke="#fff" stroke-width="1.5"/>
<text x="906.5" y="454.5" font-size="9.95" fill="#605e5c" font-family="Liberation Sans">Currency</text>
<text x="984.6" y="454.5" font-size="9.95" fill="#605e5c" font-family="Liberation Sans">EUR</text>
<text x="1224.4" y="454.5" font-size="9.95" fill="#605e5c" font-family="Liberation Sans">USD</text>
<text x="906.5" y="471" font-size="9.95" fill="#605e5c" font-family="Liberation Sans">Company</text>
<text x="984.6" y="471" font-size="9.95" fill="#605e5c" font-family="Liberation Sans">Actual balance</text>
<text x="1061.3" y="471" font-size="9.95" fill="#605e5c" font-family="Liberation Sans">Actual balance in system currency</text>
<text x="1224.4" y="471" font-size="9.95" fill="#605e5c" font-family="Liberation Sans">Actual balance</text>
<text x="1301.9" y="471" font-size="9.95" fill="#605e5c" font-family="Liberation Sans">Actual balance in system currency</text>
<text x="906.5" y="495" font-size="10.3" font-weight="bold" fill="#444444" font-family="Liberation Sans">demf</text>
<text x="1051.4" y="495" text-anchor="end" font-size="10.5" font-weight="bold" fill="#444444" font-family="Liberation Sans">316,607.06</text>
<text x="1214.5" y="495" text-anchor="end" font-size="10.5" font-weight="bold" fill="#444444" font-family="Liberation Sans">433,708.30</text>
<text x="1291.3" y="495" text-anchor="end" font-size="10.5" font-weight="bold" fill="#444444" font-family="Liberation Sans">100,000.00</text>
<text x="1410.5" y="495" text-anchor="end" font-size="10.5" font-weight="bold" fill="#444444" font-family="Liberation Sans">1</text>
<text x="916.4" y="510.7" font-size="9.6" font-weight="normal" fill="#5f5f5f" font-family="Liberation Sans">DEMF OPER</text>
<text x="1051.4" y="511.5" text-anchor="end" font-size="10" font-weight="normal" fill="#5f5f5f" font-family="Liberation Sans">316,607.06</text>
<text x="1214.5" y="511.5" text-anchor="end" font-size="10" font-weight="normal" fill="#5f5f5f" font-family="Liberation Sans">433,708.30</text>
<text x="916.4" y="527.2" font-size="9.6" font-weight="normal" fill="#5f5f5f" font-family="Liberation Sans">DEMF USD</text>
<text x="1291.3" y="528" text-anchor="end" font-size="10" font-weight="normal" fill="#5f5f5f" font-family="Liberation Sans">100,000.00</text>
<text x="906.5" y="544.4" font-size="10.3" font-weight="bold" fill="#444444" font-family="Liberation Sans">usmf</text>
<text x="1051.4" y="544.4" text-anchor="end" font-size="10.5" font-weight="bold" fill="#444444" font-family="Liberation Sans">100,000.00</text>
<text x="1214.5" y="544.4" text-anchor="end" font-size="10.5" font-weight="bold" fill="#444444" font-family="Liberation Sans">136,986.30</text>
<text x="1291.3" y="544.4" text-anchor="end" font-size="10.5" font-weight="bold" fill="#444444" font-family="Liberation Sans">660,512.96</text>
<text x="1410.5" y="544.4" text-anchor="end" font-size="10.5" font-weight="bold" fill="#444444" font-family="Liberation Sans">6</text>
<text x="916.4" y="559.5" font-size="9.6" font-weight="normal" fill="#5f5f5f" font-family="Liberation Sans">USMF EUR</text>
<text x="1051.4" y="560.3" text-anchor="end" font-size="10" font-weight="normal" fill="#5f5f5f" font-family="Liberation Sans">100,000.00</text>
<text x="1214.5" y="560.3" text-anchor="end" font-size="10" font-weight="normal" fill="#5f5f5f" font-family="Liberation Sans">136,986.30</text>
<text x="916.4" y="575.9000000000001" font-size="9.6" font-weight="normal" fill="#5f5f5f" font-family="Liberation Sans">USMF OPER</text>
<text x="1291.3" y="576.7" text-anchor="end" font-size="10" font-weight="normal" fill="#5f5f5f" font-family="Liberation Sans">427,852.12</text>
<text x="916.4" y="592.4000000000001" font-size="9.6" font-weight="normal" fill="#5f5f5f" font-family="Liberation Sans">USMF PAYRL</text>
<text x="1291.3" y="593.2" text-anchor="end" font-size="10" font-weight="normal" fill="#5f5f5f" font-family="Liberation Sans">232,660.84</text>
<text x="906.5" y="609.4" font-size="10.3" font-weight="bold" fill="#444444" font-family="Liberation Sans">usrt</text>
<text x="1051.4" y="609.4" text-anchor="end" font-size="10.5" font-weight="bold" fill="#444444" font-family="Liberation Sans">100,000.00</text>
<text x="1214.5" y="609.4" text-anchor="end" font-size="10.5" font-weight="bold" fill="#444444" font-family="Liberation Sans">136,986.30</text>
<text x="1291.3" y="609.4" text-anchor="end" font-size="10.5" font-weight="bold" fill="#444444" font-family="Liberation Sans">219,774.93</text>
<text x="1410.5" y="609.4" text-anchor="end" font-size="10.5" font-weight="bold" fill="#444444" font-family="Liberation Sans">2</text>
<text x="906.5" y="626.2" font-size="10.3" font-weight="bold" fill="#444444" font-family="Liberation Sans">Total</text>
<text x="1051.4" y="626.2" text-anchor="end" font-size="10.5" font-weight="bold" fill="#444444" font-family="Liberation Sans">903,563.12</text>
<text x="1214.5" y="626.2" text-anchor="end" font-size="10.5" font-weight="bold" fill="#444444" font-family="Liberation Sans">1,237,757.69</text>
<text x="1291.3" y="626.2" text-anchor="end" font-size="10.5" font-weight="bold" fill="#444444" font-family="Liberation Sans">1,339,468.29</text>
<text x="1410.5" y="626.2" text-anchor="end" font-size="10.5" font-weight="bold" fill="#444444" font-family="Liberation Sans">1,3</text>
</g>
<rect x="1406.6" y="443" width="5.6" height="99" rx="2.8" fill="#a6a6a6"/>
<rect x="903.2" y="631.4" width="445" height="6" rx="3" fill="#a6a6a6"/>
</svg>
<svg class="a" style="left:220px;top:659px" width="1197" height="181" viewBox="220 659 1197 181">
<text x="226.3" y="671.8" font-size="12.5" fill="#605e5c" font-family="Liberation Sans">Purchases by month</text>
<path d="M261 689.3 H1415 M261 739.7 H1415 M261 790.3 H1415" stroke="#ececec" stroke-width="1"/>
<text x="251.5" y="692.6" text-anchor="end" font-size="9.7" fill="#605e5c" font-family="Liberation Sans">100M</text>
<text x="251.5" y="743" text-anchor="end" font-size="9.7" fill="#605e5c" font-family="Liberation Sans">50M</text>
<text x="251.5" y="793.6" text-anchor="end" font-size="9.7" fill="#605e5c" font-family="Liberation Sans">0M</text>
<text x="300.1" y="804.3" text-anchor="middle" font-size="9.7" fill="#605e5c" font-family="Liberation Sans">January</text>
<text x="397.9" y="804.3" text-anchor="middle" font-size="9.7" fill="#605e5c" font-family="Liberation Sans">February</text>
<text x="495.6" y="804.3" text-anchor="middle" font-size="9.7" fill="#605e5c" font-family="Liberation Sans">March</text>
<text x="593.4" y="804.3" text-anchor="middle" font-size="9.7" fill="#605e5c" font-family="Liberation Sans">April</text>
<text x="691.1" y="804.3" text-anchor="middle" font-size="9.7" fill="#605e5c" font-family="Liberation Sans">May</text>
<text x="788.9" y="804.3" text-anchor="middle" font-size="9.7" fill="#605e5c" font-family="Liberation Sans">June</text>
<text x="886.6" y="804.3" text-anchor="middle" font-size="9.7" fill="#605e5c" font-family="Liberation Sans">July</text>
<text x="984.4" y="804.3" text-anchor="middle" font-size="9.7" fill="#605e5c" font-family="Liberation Sans">August</text>
<text x="1082.1" y="804.3" text-anchor="middle" font-size="9.7" fill="#605e5c" font-family="Liberation Sans">September</text>
<text x="1179.8" y="804.3" text-anchor="middle" font-size="9.7" fill="#605e5c" font-family="Liberation Sans">October</text>
<text x="1277.6" y="804.3" text-anchor="middle" font-size="9.7" fill="#605e5c" font-family="Liberation Sans">November</text>
<text x="1375.3" y="804.3" text-anchor="middle" font-size="9.7" fill="#605e5c" font-family="Liberation Sans">December</text>
<polyline points="300.1,786.3 397.9,788.8 495.6,789.3 593.4,789.3 691.1,789.3 788.9,789.3 886.6,789.3 984.4,789.3 1082.1,789.3 1179.8,789.3 1277.6,789.3 1375.3,789.3" fill="none" stroke="#45c9a0" stroke-width="2" stroke-linejoin="round"/>
<polyline points="300.1,789.5 397.9,789.5 495.6,789.5 593.4,789.5 691.1,789.5 788.9,789.5 886.6,789.5 984.4,789.5 1082.1,789.5 1179.8,789.5 1277.6,789.5 1375.3,789.5" fill="none" stroke="#f5bf3a" stroke-width="2.4" stroke-linejoin="round"/>
<polyline points="397.9,790.1 495.6,790.1 593.4,790.1 691.1,790.1 788.9,790.1 886.6,790.1 984.4,790.1 1082.1,790.1 1179.8,790.1 1277.6,790.1 1375.3,790.1" fill="none" stroke="#b63fdc" stroke-width="2.8" stroke-linejoin="round"/>
<polyline points="300.1,761.1 397.9,787.8" fill="none" stroke="#b63fdc" stroke-width="2.4" stroke-linejoin="round"/>
<polyline points="397.9,789.7 495.6,789.7 593.4,789.7 691.1,789.7 788.9,789.7 886.6,789.7 984.4,789.7 1082.1,789.7 1179.8,789.7 1277.6,789.7" fill="none" stroke="#ef4040" stroke-width="2" stroke-linejoin="round"/>
<polyline points="1179.8,789.3 1277.6,786.3 1375.3,695.5" fill="none" stroke="#f1e432" stroke-width="2.4" stroke-linejoin="round"/>
<polyline points="1277.6,789.8 1375.3,752.0" fill="none" stroke="#3fd17a" stroke-width="2.2" stroke-linejoin="round"/>
<polyline points="300.1,789.7 397.9,789.7 495.6,789.7 593.4,789.7 691.1,789.7 788.9,789.7 886.6,789.7 984.4,789.7 1082.1,789.7 1179.8,789.7 1277.6,789.7 1375.3,706.6" fill="none" stroke="#f5843c" stroke-width="2.4" stroke-linejoin="round"/>
<polyline points="300.1,748.0 397.9,749.0 495.6,749.0 593.4,751.2 691.1,749.0 788.9,744.9 886.6,736.2 984.4,728.8 1082.1,720.3 1179.8,714.2 1277.6,706.6 1375.3,692.5" fill="none" stroke="#c6f22b" stroke-width="2.4" stroke-linejoin="round"/>
<polyline points="300.1,747.0 397.9,743.9 495.6,737.4 593.4,728.8 691.1,749.0 788.9,750.3 886.6,749.0 984.4,709.7 1082.1,777.7 1179.8,737.4 1277.6,744.4 1375.3,753.5" fill="none" stroke="#0adcd6" stroke-width="2.4" stroke-linejoin="round"/>
<circle cx="397.9" cy="787.8" r="3.8" fill="#5c3bd0"/>
<circle cx="593.4" cy="790.0" r="3.8" fill="#5c3bd0"/>
<circle cx="691.1" cy="790.0" r="3.8" fill="#3c78d8"/>
<circle cx="788.9" cy="790.0" r="3.8" fill="#0a6ae6"/>
<circle cx="984.4" cy="790.0" r="3.8" fill="#3c78d8"/>
<circle cx="1082.1" cy="790.0" r="3.8" fill="#e63fb0"/>
<circle cx="1277.6" cy="785.3" r="3.8" fill="#45c9a0"/>
<circle cx="1375.3" cy="790.0" r="3.8" fill="#3b3bf2"/>
<text x="300.1" y="737.4" text-anchor="middle" font-size="10.6" font-weight="bold" fill="#605e5c" font-family="Liberation Sans">43M</text>
<text x="300.1" y="751.4" text-anchor="middle" font-size="10.6" font-weight="bold" fill="#605e5c" font-family="Liberation Sans">29M</text>
<text x="300.1" y="764.3" text-anchor="middle" font-size="10.6" font-weight="bold" fill="#605e5c" font-family="Liberation Sans">42M</text>
<text x="300.1" y="781.3" text-anchor="middle" font-size="10.6" font-weight="bold" fill="#605e5c" font-family="Liberation Sans">0M</text>
<text x="397.9" y="734.5" text-anchor="middle" font-size="10.6" font-weight="bold" fill="#605e5c" font-family="Liberation Sans">46M</text>
<text x="397.9" y="764.3" text-anchor="middle" font-size="10.6" font-weight="bold" fill="#605e5c" font-family="Liberation Sans">41M</text>
<text x="397.9" y="781.3" text-anchor="middle" font-size="10.6" font-weight="bold" fill="#605e5c" font-family="Liberation Sans">0M</text>
<text x="495.6" y="728.3" text-anchor="middle" font-size="10.6" font-weight="bold" fill="#605e5c" font-family="Liberation Sans">52M</text>
<text x="495.6" y="741.3" text-anchor="middle" font-size="10.6" font-weight="bold" fill="#605e5c" font-family="Liberation Sans">40M</text>
<text x="495.6" y="781.3" text-anchor="middle" font-size="10.6" font-weight="bold" fill="#605e5c" font-family="Liberation Sans">0M</text>
<text x="593.4" y="720.2" text-anchor="middle" font-size="10.6" font-weight="bold" fill="#605e5c" font-family="Liberation Sans">60M</text>
<text x="593.4" y="768.4" text-anchor="middle" font-size="10.6" font-weight="bold" fill="#605e5c" font-family="Liberation Sans">38M</text>
<text x="593.4" y="781.3" text-anchor="middle" font-size="10.6" font-weight="bold" fill="#605e5c" font-family="Liberation Sans">0M</text>
<text x="691.1" y="740.1" text-anchor="middle" font-size="10.6" font-weight="bold" fill="#605e5c" font-family="Liberation Sans">40M</text>
<text x="691.1" y="766.1" text-anchor="middle" font-size="10.6" font-weight="bold" fill="#605e5c" font-family="Liberation Sans">40M</text>
<text x="691.1" y="781.3" text-anchor="middle" font-size="10.6" font-weight="bold" fill="#605e5c" font-family="Liberation Sans">0M</text>
<text x="788.9" y="735.3" text-anchor="middle" font-size="10.6" font-weight="bold" fill="#605e5c" font-family="Liberation Sans">45M</text>
<text x="788.9" y="767.3" text-anchor="middle" font-size="10.6" font-weight="bold" fill="#605e5c" font-family="Liberation Sans">39M</text>
<text x="788.9" y="781.3" text-anchor="middle" font-size="10.6" font-weight="bold" fill="#605e5c" font-family="Liberation Sans">0M</text>
<text x="886.6" y="727.2" text-anchor="middle" font-size="10.6" font-weight="bold" fill="#605e5c" font-family="Liberation Sans">53M</text>
<text x="886.6" y="740.4" text-anchor="middle" font-size="10.6" font-weight="bold" fill="#605e5c" font-family="Liberation Sans">40M</text>
<text x="886.6" y="781.4" text-anchor="middle" font-size="10.6" font-weight="bold" fill="#605e5c" font-family="Liberation Sans">0M</text>
<text x="984.4" y="700.4" text-anchor="middle" font-size="10.6" font-weight="bold" fill="#605e5c" font-family="Liberation Sans">80M</text>
<text x="984.4" y="720.4" text-anchor="middle" font-size="10.6" font-weight="bold" fill="#605e5c" font-family="Liberation Sans">60M</text>
<text x="984.4" y="781.4" text-anchor="middle" font-size="10.6" font-weight="bold" fill="#605e5c" font-family="Liberation Sans">0M</text>
<text x="1082.1" y="712.6" text-anchor="middle" font-size="10.6" font-weight="bold" fill="#605e5c" font-family="Liberation Sans">68M</text>
<text x="1082.1" y="781.4" text-anchor="middle" font-size="10.6" font-weight="bold" fill="#605e5c" font-family="Liberation Sans">0M</text>
<text x="1179.8" y="705.3" text-anchor="middle" font-size="10.6" font-weight="bold" fill="#605e5c" font-family="Liberation Sans">75M</text>
<text x="1179.8" y="728.5" text-anchor="middle" font-size="10.6" font-weight="bold" fill="#605e5c" font-family="Liberation Sans">52M</text>
<text x="1179.8" y="781.4" text-anchor="middle" font-size="10.6" font-weight="bold" fill="#605e5c" font-family="Liberation Sans">0M</text>
<text x="1277.6" y="697.5" text-anchor="middle" font-size="10.6" font-weight="bold" fill="#605e5c" font-family="Liberation Sans">83M</text>
<text x="1277.6" y="735.6" text-anchor="middle" font-size="10.6" font-weight="bold" fill="#605e5c" font-family="Liberation Sans">45M</text>
<text x="1277.6" y="781.6" text-anchor="middle" font-size="10.6" font-weight="bold" fill="#605e5c" font-family="Liberation Sans">0M</text>
<text x="1375.3" y="696.4" text-anchor="middle" font-size="10.6" font-weight="bold" fill="#605e5c" font-family="Liberation Sans">96M</text>
<text x="1375.3" y="707.3" text-anchor="middle" font-size="10.6" font-weight="bold" fill="#605e5c" font-family="Liberation Sans">98M</text>
<text x="1375.3" y="723.2" text-anchor="middle" font-size="10.6" font-weight="bold" fill="#605e5c" font-family="Liberation Sans">83M</text>
<text x="1375.3" y="743.5" text-anchor="middle" font-size="10.6" font-weight="bold" fill="#605e5c" font-family="Liberation Sans">38M</text>
<text x="1375.3" y="770.3" text-anchor="middle" font-size="10.6" font-weight="bold" fill="#605e5c" font-family="Liberation Sans">36M</text>
<text x="1375.3" y="781.6" text-anchor="middle" font-size="10.6" font-weight="bold" fill="#605e5c" font-family="Liberation Sans">0M</text>
<text x="226.3" y="829.9" font-size="9.6" fill="#605e5c" font-family="Liberation Sans">Company</text>
<circle cx="279.5" cy="826.4" r="4.6" fill="#1aafff"/>
<text x="286.0" y="829.9" font-size="9.4" fill="#605e5c" font-family="Liberation Sans">brmf</text>
<circle cx="315.6" cy="826.4" r="4.6" fill="#3c78d8"/>
<text x="322.1" y="829.9" font-size="9.4" fill="#605e5c" font-family="Liberation Sans">cnmf</text>
<circle cx="353" cy="826.4" r="4.6" fill="#3fd17a"/>
<text x="359.5" y="829.9" font-size="9.4" fill="#605e5c" font-family="Liberation Sans">demf</text>
<circle cx="391.4" cy="826.4" r="4.6" fill="#9acf0b"/>
<text x="397.9" y="829.9" font-size="9.4" fill="#605e5c" font-family="Liberation Sans">frrt</text>
<circle cx="419.9" cy="826.4" r="4.6" fill="#f5bf3a"/>
<text x="426.4" y="829.9" font-size="9.4" fill="#605e5c" font-family="Liberation Sans">gbsi</text>
<circle cx="453.6" cy="826.4" r="4.6" fill="#0adcd6"/>
<text x="460.1" y="829.9" font-size="9.4" fill="#605e5c" font-family="Liberation Sans">inmf</text>
<circle cx="488.9" cy="826.4" r="4.6" fill="#3b3bf2"/>
<text x="495.4" y="829.9" font-size="9.4" fill="#605e5c" font-family="Liberation Sans">itco</text>
<circle cx="520" cy="826.4" r="4.6" fill="#5c3bd0"/>
<text x="526.5" y="829.9" font-size="9.4" fill="#605e5c" font-family="Liberation Sans">jpmf</text>
<circle cx="554.6" cy="826.4" r="4.6" fill="#45c9a0"/>
<text x="561.1" y="829.9" font-size="9.4" fill="#605e5c" font-family="Liberation Sans">mxmf</text>
<circle cx="594.7" cy="826.4" r="4.6" fill="#2ec81e"/>
<text x="601.2" y="829.9" font-size="9.4" fill="#605e5c" font-family="Liberation Sans">mymf</text>
<circle cx="635.3" cy="826.4" r="4.6" fill="#c6f22b"/>
<text x="641.8" y="829.9" font-size="9.4" fill="#605e5c" font-family="Liberation Sans">rumf</text>
<circle cx="670.9" cy="826.4" r="4.6" fill="#0a6ae6"/>
<text x="677.4" y="829.9" font-size="9.4" fill="#605e5c" font-family="Liberation Sans">samf</text>
<circle cx="707.3" cy="826.4" r="4.6" fill="#e63fb0"/>
<text x="713.8" y="829.9" font-size="9.4" fill="#605e5c" font-family="Liberation Sans">thmf</text>
<circle cx="742.6" cy="826.4" r="4.6" fill="#f1e432"/>
<text x="749.1" y="829.9" font-size="9.4" fill="#605e5c" font-family="Liberation Sans">usmf</text>
<circle cx="779" cy="826.4" r="4.6" fill="#ef4040"/>
<text x="785.5" y="829.9" font-size="9.4" fill="#605e5c" font-family="Liberation Sans">usp2</text>
<circle cx="815.4" cy="826.4" r="4.6" fill="#3fd17a"/>
<text x="821.9" y="829.9" font-size="9.4" fill="#605e5c" font-family="Liberation Sans">uspi</text>
<circle cx="849" cy="826.4" r="4.6" fill="#b63fdc"/>
<text x="855.5" y="829.9" font-size="9.4" fill="#605e5c" font-family="Liberation Sans">usrt</text>
<circle cx="880.7" cy="826.4" r="4.6" fill="#f5843c"/>
<text x="887.2" y="829.9" font-size="9.4" fill="#605e5c" font-family="Liberation Sans">ussi</text>
</svg>
</body></html>
